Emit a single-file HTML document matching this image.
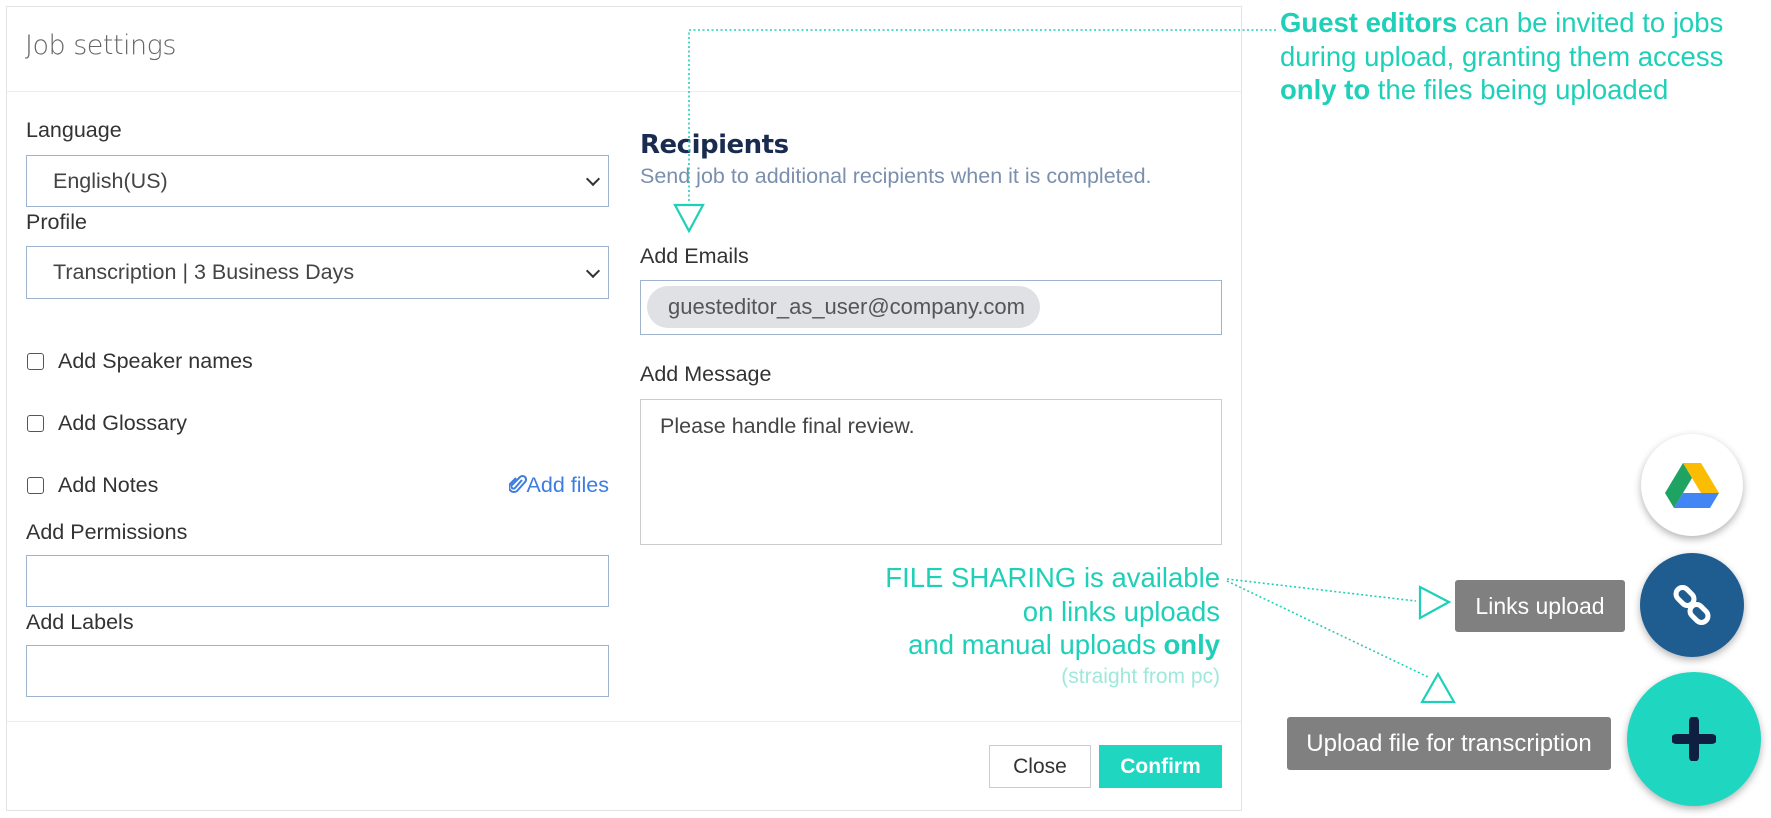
<!DOCTYPE html>
<html><head><meta charset="utf-8"><style>
*{box-sizing:border-box;margin:0;padding:0}
body{width:1771px;height:818px;background:#fff;position:relative;overflow:hidden;font-family:"Liberation Sans",Arial,sans-serif;color:#333}
.a{position:absolute}
.modal{left:6px;top:6px;width:1236px;height:805px;border:1px solid #e3e3e3;background:#fff}
.lbl{font-size:21.5px;color:#333;white-space:nowrap}
.box{border:1px solid #9fb3cf;background:#fff}
.sel{font-size:21.5px;color:#444;padding-left:26px;display:flex;align-items:center}
.chev{position:absolute;right:10px;top:50%;width:10px;height:10px;border-right:2px solid #333;border-bottom:2px solid #333;transform:translateY(-70%) rotate(45deg)}
.cb{width:17px;height:17px;border:1.5px solid #555;border-radius:3px}
.teal{color:#1fd0b8}
.pill{background:#808080;color:#fff;font-size:23px;display:flex;align-items:center;justify-content:center;border-radius:3px}
.circ{border-radius:50%;box-shadow:0 3px 8px rgba(0,0,0,.3);display:flex;align-items:center;justify-content:center}
</style></head><body>
<div class="a modal"></div>
<div class="a" style="left:7px;top:91px;width:1234px;height:1px;background:#ececec"></div>
<div class="a" style="left:25px;top:30px;font-size:27px;color:#666;font-family:'DejaVu Sans',sans-serif;font-weight:200;letter-spacing:-0.5px">Job settings</div>

<div class="a lbl" style="left:26px;top:118px">Language</div>
<div class="a box sel" style="left:26px;top:155px;width:583px;height:52px">English(US)<span class="chev"></span></div>
<div class="a lbl" style="left:26px;top:210px">Profile</div>
<div class="a box sel" style="left:26px;top:246px;width:583px;height:53px">Transcription | 3 Business Days<span class="chev"></span></div>

<div class="a cb" style="left:27px;top:353px"></div><div class="a lbl" style="left:58px;top:349px">Add Speaker names</div>
<div class="a cb" style="left:27px;top:415px"></div><div class="a lbl" style="left:58px;top:411px">Add Glossary</div>
<div class="a cb" style="left:27px;top:477px"></div><div class="a lbl" style="left:58px;top:473px">Add Notes</div>
<div class="a" style="left:480px;top:473px;font-size:21.5px;color:#3b7de0;width:129px;text-align:right;white-space:nowrap"><svg width="18" height="20" viewBox="0 0 18 20" style="vertical-align:-2px"><path d="M13 6 L6 14 a2 2 0 0 1 -3 -3 L11 3 a3.5 3.5 0 0 1 5 5 L8 17 a5 5 0 0 1 -7 -7 L7 4" fill="none" stroke="#3b7de0" stroke-width="2"/></svg>Add files</div>
<div class="a lbl" style="left:26px;top:520px">Add Permissions</div>
<div class="a box" style="left:26px;top:555px;width:583px;height:52px"></div>
<div class="a lbl" style="left:26px;top:610px">Add Labels</div>
<div class="a box" style="left:26px;top:645px;width:583px;height:52px"></div>

<div class="a" style="left:7px;top:721px;width:1234px;height:1px;background:#ececec"></div>
<div class="a" style="left:989px;top:745px;width:102px;height:43px;border:1px solid #ccc;font-size:21px;color:#333;display:flex;align-items:center;justify-content:center">Close</div>
<div class="a" style="left:1099px;top:745px;width:123px;height:43px;background:#1fd6c1;font-size:21px;color:#fff;font-weight:bold;display:flex;align-items:center;justify-content:center">Confirm</div>

<div class="a" style="left:640px;top:130px;font-size:26px;font-weight:bold;color:#1a2b50;font-family:'DejaVu Sans',sans-serif;letter-spacing:-0.5px">Recipients</div>
<div class="a" style="left:640px;top:164px;font-size:21.5px;color:#7b8fae;white-space:nowrap">Send job to additional recipients when it is completed.</div>
<div class="a lbl" style="left:640px;top:244px">Add Emails</div>
<div class="a box" style="left:640px;top:280px;width:582px;height:55px"></div>
<div class="a" style="left:647px;top:286px;width:393px;height:42px;border-radius:21px;background:#dfe1e5;font-size:22px;color:#555;padding-left:21px;display:flex;align-items:center;white-space:nowrap">guesteditor_as_user@company.com</div>
<div class="a lbl" style="left:640px;top:362px">Add Message</div>
<div class="a" style="left:640px;top:399px;width:582px;height:146px;border:1px solid #ccc"></div>
<div class="a" style="left:660px;top:414px;font-size:21.5px;color:#444">Please handle final review.</div>

<div class="a teal" style="left:700px;top:561px;width:520px;text-align:right;font-size:27.5px;line-height:33.5px">FILE SHARING is available<br>on links uploads<br>and manual uploads <b>only</b></div>
<div class="a" style="left:850px;top:665px;width:370px;text-align:right;font-size:21px;color:#9fe8dc">(straight from pc)</div>

<div class="a teal" style="left:1280px;top:6px;font-size:27.5px;line-height:33.5px;white-space:nowrap"><b>Guest editors</b> can be invited to jobs<br>during upload, granting them access<br><b>only to</b> the files being uploaded</div>

<svg class="a" style="left:0;top:0" width="1771" height="818">
<g fill="none" stroke="#1fd0b8" stroke-width="1.6" stroke-dasharray="2 2.5">
<path d="M1276 30 H689 V202"/>
<path d="M1227 579 L1416 601"/>
<path d="M1227 581 L1428 677"/>
</g>
<g fill="none" stroke="#1fd0b8" stroke-width="2.2">
<path d="M675 205 L703 205 L689 231 Z"/>
<path d="M1420 587 L1449 602 L1420 618 Z"/>
<path d="M1422 702 L1438 674 L1454 702 Z"/>
</g>
</svg>

<div class="a pill" style="left:1455px;top:580px;width:170px;height:52px">Links upload</div>
<div class="a pill" style="left:1287px;top:717px;width:324px;height:53px;font-size:24px">Upload file for transcription</div>

<div class="a circ" style="left:1641px;top:434px;width:102px;height:102px;background:#fff">
<svg width="54" height="48" viewBox="0 0 54 48"><path d="M18 2 H36 L54 32 H36 Z" fill="#fbbc04"/><path d="M18 2 L0 32 L9 47 L27 17 Z" fill="#1ea362"/><path d="M9 47 H45 L54 32 H18 Z" fill="#4285f4"/></svg>
</div>
<div class="a circ" style="left:1640px;top:553px;width:104px;height:104px;background:#1f5c8f">
<svg width="44" height="44" viewBox="0 0 44 44"><g fill="none" stroke="#fff" stroke-width="5"><rect x="5" y="7" width="20" height="13" rx="6.5" transform="rotate(45 15 13.5)"/><rect x="19" y="24" width="20" height="13" rx="6.5" transform="rotate(45 29 30.5)"/></g></svg>
</div>
<div class="a circ" style="left:1627px;top:672px;width:134px;height:134px;background:#1fd6c1">
<svg width="44" height="44" viewBox="0 0 44 44"><path d="M22 4 V40 M4 22 H40" stroke="#0e1f42" stroke-width="10" stroke-linecap="round"/></svg>
</div>
</body></html>
